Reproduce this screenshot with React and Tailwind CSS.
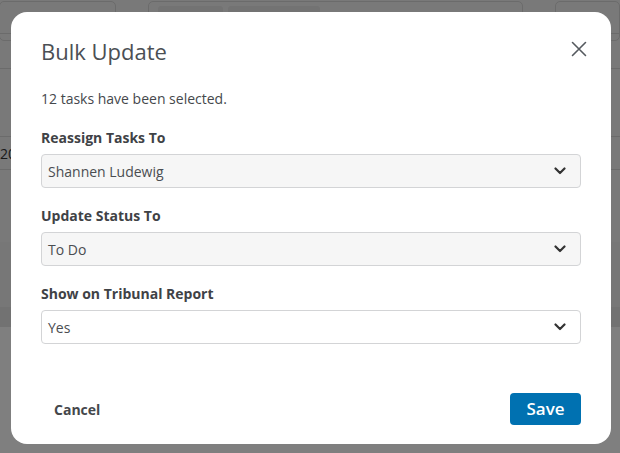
import { useState } from 'react'

function ChevronDown() {
  return (
    <svg width="12" height="8" viewBox="0 0 12 8" fill="none" className="shrink-0">
      <path d="M1.5 1.5 L6 6 L10.5 1.5" stroke="#333" strokeWidth="2.2" strokeLinecap="round" strokeLinejoin="round" />
    </svg>
  )
}

function SelectField({ label, value, muted, first }) {
  return (
    <div className={first ? 'mt-[19px]' : 'mt-[18px]'}>
      <div className="text-[14px] leading-[20px] font-bold text-[#3f4246] mb-[6px]">{label}</div>
      <button
        className={`w-full h-[34px] flex items-center justify-between pl-[6px] pr-[14px] rounded-[4px] border border-[#d3d4d6] text-left ${
          muted ? 'bg-[#f6f6f6]' : 'bg-white'
        }`}
      >
        <span className="text-[14px] text-[#4a4d51]">{value}</span>
        <ChevronDown />
      </button>
    </div>
  )
}

export default function App() {
  const [open] = useState(true)

  return (
    <div className="relative w-[620px] h-[453px] overflow-hidden bg-white font-['Open_Sans',sans-serif]">
      {/* Page behind the dialog */}
      <div className="bg-[#f3f3f3] h-[242px]">
        <div className="h-[34px] border-b border-[#d6d6d6] flex items-start pt-[1px] gap-[32px]">
          <div className="w-[117px] h-[40px] -ml-[1px] rounded-[5px] border border-[#d6d6d6]" />
          <div className="w-[375px] h-[40px] rounded-[5px] border border-[#d6d6d6] flex gap-[5px] px-[9px] pt-[4px]">
            <div className="w-[65px] h-[12px] rounded-[3px] bg-[#e6e6e6]" />
            <div className="w-[92px] h-[12px] rounded-[3px] bg-[#e6e6e6]" />
          </div>
          <div className="flex-1 h-[40px] rounded-[5px] border border-[#d6d6d6]" />
        </div>
        <div className="h-[35px] border-b border-[#d6d6d6]" />
        <div className="h-[67px]" />
        <div className="h-[34px] border-y border-[#d6d6d6] flex items-center text-[14px] text-[#333]">
          20
        </div>
      </div>
      <div className="h-[65px] bg-[#eeeeee]" />
      <div className="h-[20px] bg-[#e4e4e4]" />

      {/* Overlay */}
      {open && (
        <div className="absolute inset-0 bg-black/50 pl-[11px] pt-[12px]">
          <div className="w-[600px] h-[432px] bg-white rounded-[16px] flex flex-col px-[30px] pt-[24px] pb-[19px]">
            <div className="flex items-start justify-between">
              <h2 className="text-[22px] leading-[30px] font-normal text-[#4b4f54]">Bulk Update</h2>
              <button className="mt-[5px] -mr-[6px]">
                <svg width="16" height="16" viewBox="0 0 16 16" fill="none">
                  <path d="M1.5 1.5 L14.5 14.5 M14.5 1.5 L1.5 14.5" stroke="#555a5f" strokeWidth="1.6" strokeLinecap="round" />
                </svg>
              </button>
            </div>

            <p className="mt-[23px] text-[14px] leading-[20px] text-[#45484c]">12 tasks have been selected.</p>

            <SelectField first label="Reassign Tasks To" value="Shannen Ludewig" muted />
            <SelectField label="Update Status To" value="To Do" muted />
            <SelectField label="Show on Tribunal Report" value="Yes" />

            <div className="mt-auto flex items-center justify-between">
              <button className="px-[13px] h-[32px] text-[14px] font-bold text-[#44474b]">Cancel</button>
              <button className="w-[71px] h-[32px] rounded-[4px] bg-[#0071b1] text-white text-[17px] font-semibold">
                Save
              </button>
            </div>
          </div>
        </div>
      )}
    </div>
  )
}
